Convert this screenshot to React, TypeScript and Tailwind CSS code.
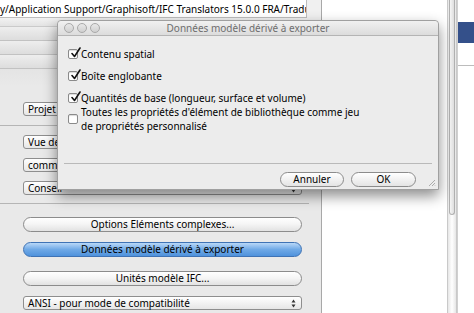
import React from 'react';

const font = { fontFamily: '"Lucida Grande", "Noto Sans", "DejaVu Sans", sans-serif' };

const Check = () => (
  <svg width="12" height="12" viewBox="0 0 12 12" className="absolute -top-[3px] left-[1px]">
    <path d="M2 6.5 L4.5 9.5 L10 1" fill="none" stroke="#111" strokeWidth="1.6" strokeLinecap="round" strokeLinejoin="round" />
  </svg>
);

const Arrows = () => (
  <svg width="5" height="9" viewBox="0 0 5 9" className="absolute right-[5px] top-[2px]">
    <path d="M0.5 3.5 L2.5 0.5 L4.5 3.5 Z M0.5 5.5 L2.5 8.5 L4.5 5.5 Z" fill="#333" />
  </svg>
);

const CheckRow = ({ checked, children, className = '' }: { checked: boolean; children: React.ReactNode; className?: string }) => (
  <div className={`flex items-center gap-[3px] ${className}`}>
    <div className="relative w-[10px] h-[10px] shrink-0 bg-white border border-[#8a8a8a] rounded-[2px] shadow-[inset_0_1px_1px_rgba(0,0,0,0.15)]">
      {checked && <Check />}
    </div>
    <div className="leading-[14px]">{children}</div>
  </div>
);

const Pill = ({ label, blue }: { label: string; blue?: boolean }) => (
  <div
    className={`h-[15px] w-[279px] rounded-full border flex items-center justify-center text-[10px] ${
      blue
        ? 'border-[#3f73b5] bg-gradient-to-b from-[#b9d8f7] via-[#6fa9e6] to-[#4f92dc] text-black'
        : 'border-[#8c8c8c] bg-gradient-to-b from-white via-[#f4f4f4] to-[#e2e2e2] text-black'
    }`}
  >
    {label}
  </div>
);

const Bevel = ({ label, arrow }: { label: string; arrow?: boolean }) => (
  <div className="relative h-[14px] w-[279px] rounded-[3px] border border-[#8e8e8e] bg-gradient-to-b from-white to-[#e6e6e6] flex items-center px-[4px] text-[10px]">
    {label}
    {arrow && <Arrows />}
  </div>
);

export default function App() {
  return (
    <div className="relative w-[474px] h-[313px] overflow-hidden bg-white text-black" style={font}>
      <div className="flex h-full">
        {/* left settings panel */}
        <div className="w-[322px] shrink-0 bg-[#e9e9e9] border-r border-[#a8a8a8] flex flex-col">
          <div className="flex h-[18px]">
            <div className="w-[307px] bg-white border-b border-r border-[#bdbdbd] text-[10px] leading-[18px] whitespace-nowrap overflow-hidden">
              y/Application Support/Graphisoft/IFC Translators 15.0.0 FRA/Tradu
            </div>
            <div className="flex-1 bg-[#f0f0f0]" />
          </div>
          <div className="flex flex-col">
            <div className="h-[9px] bg-gradient-to-b from-[#f2f2f2] to-[#e3e3e3] border-b border-[#cacaca]" />
            <div className="h-[14px] bg-gradient-to-b from-[#eeeeee] to-[#dddddd] border-b border-[#c2c2c2]" />
            <div className="h-[14px] bg-gradient-to-b from-[#eeeeee] to-[#dddddd] border-b border-[#c2c2c2]" />
            <div className="h-[14px] bg-gradient-to-b from-[#eeeeee] to-[#dddddd] border-b border-[#c2c2c2]" />
            <div className="h-[17px] bg-gradient-to-b from-[#e4e4e4] to-[#e9e9e9]" />
          </div>
          <div className="pl-[23px] pt-[16px] flex flex-col">
            <Bevel label="Projet" />
          </div>
          <div className="mt-[9px] h-px w-[309px] bg-[#b5b5b5]" />
          <div className="pl-[23px] pt-[9px] flex flex-col gap-[9px]">
            <Bevel label="Vue de" />
            <Bevel label="commentaire" />
            <Bevel label="Conseil" arrow />
          </div>
          <div className="mt-[8px] h-px w-[309px] bg-[#b5b5b5]" />
          <div className="pl-[23px] pt-[13px] flex flex-col gap-[10px]">
            <Pill label="Options Eléments complexes..." />
            <Pill label="Données modèle dérivé à exporter" blue />
            <div className="mt-[4px]">
              <Pill label="Unités modèle IFC..." />
            </div>
            <Bevel label="ANSI - pour mode de compatibilité" arrow />
          </div>
        </div>

        {/* middle white area */}
        <div className="w-[125px] shrink-0 bg-white" />

        {/* scrollbar */}
        <div className="w-[10px] shrink-0 border-l border-r border-[#c9c9c9] bg-gradient-to-r from-[#e6e6e6] via-white to-[#e6e6e6] flex flex-col">
          <div className="h-[215px] mx-[1px] rounded-b-full border border-t-0 border-[#b0b0b0] bg-gradient-to-r from-[#f6f6f6] to-[#dedede]" />
        </div>

        {/* right strip */}
        <div className="flex-1 bg-white border-l border-[#d0d0d0] flex flex-col">
          <div className="h-[22px]" />
          <div className="h-[21px] bg-[#34508a]" />
          <div className="h-[23px] border-b border-[#bcbcbc]" />
        </div>
      </div>

      {/* dialog window */}
      <div className="absolute left-[57px] top-[20px] w-[382px] h-[170px] bg-[#ececec] border border-[#a0a0a0] rounded-t-[4px] shadow-[0_6px_14px_rgba(0,0,0,0.45)] flex flex-col text-[10px]">
        <div className="relative h-[15px] shrink-0 rounded-t-[4px] bg-gradient-to-b from-[#f1f1f1] to-[#dcdcdc] border-b border-[#b4b4b4] flex items-center justify-center">
          <div className="absolute left-[6px] top-[2px] flex gap-[3px]">
            <span className="w-[10px] h-[10px] rounded-full border border-[#a9a9a9] bg-gradient-to-b from-[#e8e8e8] to-[#d0d0d0]" />
            <span className="w-[10px] h-[10px] rounded-full border border-[#a9a9a9] bg-gradient-to-b from-[#e8e8e8] to-[#d0d0d0]" />
            <span className="w-[10px] h-[10px] rounded-full border border-[#a9a9a9] bg-gradient-to-b from-[#e8e8e8] to-[#d0d0d0]" />
          </div>
          <span className="text-[#6e6e6e] text-[10px] leading-none">Données modèle dérivé à exporter</span>
        </div>

        <div className="flex-1 flex flex-col pl-[10px] pt-[11px]">
          <CheckRow checked>Contenu spatial</CheckRow>
          <CheckRow checked className="mt-[8px]">Boîte englobante</CheckRow>
          <CheckRow checked className="mt-[8px]">Quantités de base (longueur, surface et volume)</CheckRow>
          <CheckRow checked={false}>
            Toutes les propriétés d'élément de bibliothèque comme jeu
            <br />
            de propriétés personnalisé
          </CheckRow>
          <div className="mt-[30px] mr-[6px] ml-[-4px] h-px bg-[#b9b9b9]" />
          <div className="flex justify-end gap-[7px] pr-[22px] pt-[8px]">
            <div className="w-[64px] h-[15px] rounded-full border border-[#8c8c8c] bg-gradient-to-b from-white to-[#e4e4e4] flex items-center justify-center">Annuler</div>
            <div className="w-[65px] h-[15px] rounded-full border border-[#8c8c8c] bg-gradient-to-b from-white to-[#e4e4e4] flex items-center justify-center">OK</div>
          </div>
        </div>
        <svg width="8" height="8" viewBox="0 0 8 8" className="absolute right-[2px] bottom-[2px]">
          <path d="M7 1 L1 7 M7 4 L4 7 M7 6.5 L6.5 7" stroke="#9a9a9a" strokeWidth="0.8" />
        </svg>
      </div>
    </div>
  );
}
